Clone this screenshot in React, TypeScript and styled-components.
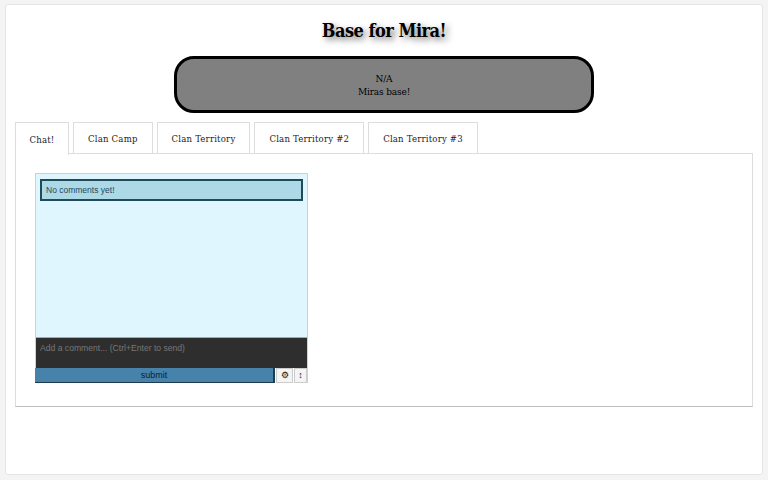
import styled, { createGlobalStyle } from 'styled-components';

const tabs = ['Chat!', 'Clan Camp', 'Clan Territory', 'Clan Territory #2', 'Clan Territory #3'];

const GlobalStyle = createGlobalStyle`
  html, body {
    margin: 0;
    height: 100%;
    background: #f4f4f4;
  }
  * {
    box-sizing: border-box;
  }
`;

export default function App() {
  return (
    <>
      <GlobalStyle />
      <Page>
        <Card>
          <Title>Base for Mira!</Title>
          <Banner>
            <span>N/A</span>
            <span>Miras base!</span>
          </Banner>
          <TabBar>
            {tabs.map((tab, i) => (
              <Tab key={tab} $active={i === 0}>{tab}</Tab>
            ))}
          </TabBar>
          <Panel>
            <Chat>
              <Messages>
                <Comment>No comments yet!</Comment>
              </Messages>
              <Input>Add a comment... (Ctrl+Enter to send)</Input>
              <Actions>
                <Submit>submit</Submit>
                <SmallButton $width={17}>⚙</SmallButton>
                <SmallButton $width={13}>↕</SmallButton>
              </Actions>
            </Chat>
          </Panel>
        </Card>
      </Page>
    </>
  );
}

const Page = styled.div`
  padding: 4px 5px;
  height: 480px;
  overflow: hidden;
`;

const Card = styled.div`
  width: 758px;
  height: 471px;
  background: #fff;
  border: 1px solid #e6e6e6;
  border-radius: 3px;
  padding: 0 9px;
  font-family: "DejaVu Serif Condensed", "DejaVu Serif", serif;
  font-stretch: condensed;
  color: #000;
`;

const Title = styled.h1`
  margin: 13px 0 0;
  height: 25px;
  font-size: 18px;
  line-height: 25px;
  font-weight: bold;
  text-align: center;
  letter-spacing: -0.5px;
  text-shadow: 3px 3px 6px rgba(0, 0, 0, 0.55);
`;

const Banner = styled.div`
  display: flex;
  flex-direction: column;
  justify-content: center;
  width: 420px;
  height: 57px;
  margin: 13px auto 0;
  background: #808080;
  border: 3px solid #000;
  border-radius: 20px;
  font-size: 10px;
  line-height: 13px;
  letter-spacing: -0.15px;
  text-align: center;
`;

const TabBar = styled.div`
  display: flex;
  gap: 4px;
  margin-top: 9px;
  height: 32px;
  position: relative;
  z-index: 1;
`;

const Tab = styled.div<{ $active?: boolean }>`
  display: flex;
  align-items: center;
  padding: 0 ${p => (p.$active ? '13.5px' : '14px')};
  height: ${p => (p.$active ? '33px' : '32px')};
  background: #fff;
  border: 1px solid #ddd;
  border-bottom: ${p => (p.$active ? 'none' : '1px solid #ddd')};
  font-size: 9.5px;
  letter-spacing: 0.2px;
  color: #222;
  white-space: nowrap;
`;

const Panel = styled.div`
  width: 738px;
  height: 254px;
  margin-top: -1px;
  padding: 19px;
  border: 1px solid #ddd;
  border-bottom: 1px solid #bdbdbd;
`;

const Chat = styled.div`
  display: flex;
  flex-direction: column;
  width: 273px;
  height: 210px;
  border: 1px solid #c3d6dc;
  border-bottom: none;
  font-family: "Liberation Sans", sans-serif;
  font-stretch: normal;
`;

const Messages = styled.div`
  flex: 1;
  padding: 5px 4px;
  background: #dff6ff;
`;

const Comment = styled.div`
  height: 22px;
  padding-left: 4px;
  background: #add8e6;
  border: 2px solid #1f4a5a;
  font-size: 8.5px;
  line-height: 18px;
  color: #1f4a5a;
`;

const Input = styled.div`
  height: 31px;
  padding: 5px 4px;
  background: #2e2e2e;
  border-top: 1px solid #aaa;
  font-size: 8.6px;
  color: #777;
`;

const Actions = styled.div`
  display: flex;
  height: 15px;
  margin-left: -1px;
`;

const Submit = styled.div`
  flex: 1;
  background: #4682a9;
  border-right: 2px solid #1f3c4f;
  border-bottom: 1px solid #1f3c4f;
  font-size: 9px;
  line-height: 15px;
  text-align: center;
  color: #0c2233;
`;

const SmallButton = styled.div<{ $width: number }>`
  width: ${p => p.$width}px;
  margin-left: 1px;
  background: #f4f4f4;
  border: 1px solid #ccc;
  font-size: 9px;
  line-height: 13px;
  text-align: center;
  color: #111;
`;
